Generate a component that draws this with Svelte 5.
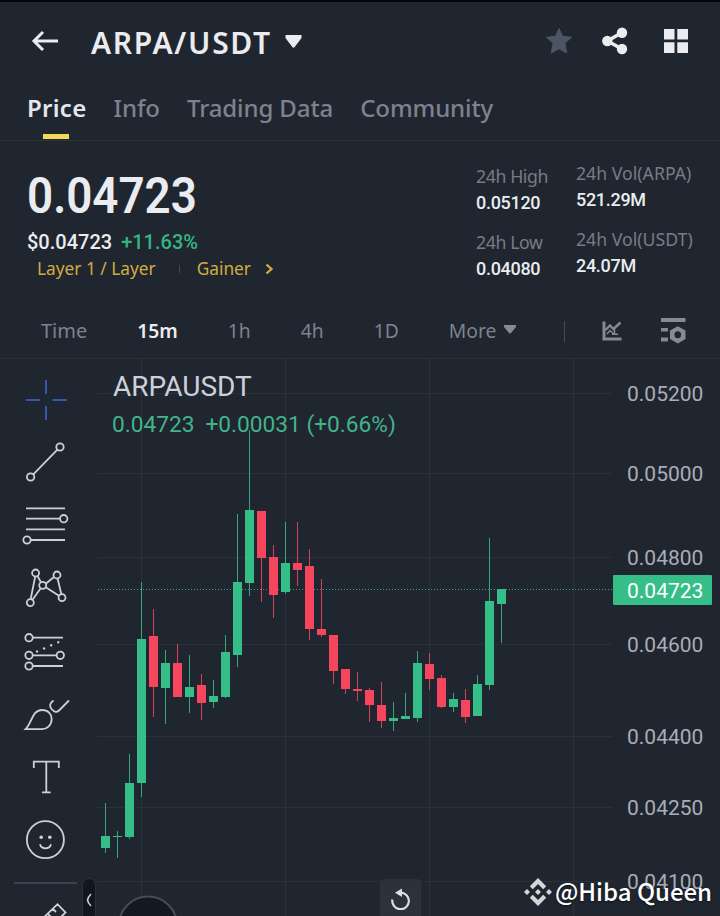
<script lang="ts">
  type Candle = [high: number, top: number, bottom: number, low: number, up: boolean];

  const tabs = ["Price", "Info", "Trading Data", "Community"];
  const intervals = ["Time", "15m", "1h", "4h", "1D"];

  let tab = $state("Price");
  let interval = $state("15m");

  // Vertical positions in chart units, one entry per 15 minutes
  const candles: Candle[] = [
    [803, 836, 848, 853, true],
    [831, 836, 837, 858, true],
    [754, 783, 837, 839, true],
    [582, 639, 783, 797, true],
    [609, 636, 687, 717, false],
    [650, 663, 688, 724, true],
    [644, 663, 697, 697, false],
    [655, 687, 697, 713, true],
    [674, 685, 703, 720, false],
    [680, 696, 702, 708, true],
    [635, 652, 697, 698, true],
    [514, 582, 655, 667, true],
    [430, 510, 583, 596, true],
    [511, 511, 558, 602, false],
    [545, 557, 595, 618, false],
    [522, 563, 592, 594, true],
    [522, 563, 570, 586, false],
    [549, 566, 629, 640, false],
    [579, 629, 635, 637, false],
    [635, 635, 671, 684, false],
    [669, 669, 689, 694, false],
    [672, 689, 691, 701, false],
    [688, 690, 705, 722, false],
    [682, 705, 721, 728, false],
    [702, 718, 721, 731, true],
    [693, 716, 719, 719, true],
    [651, 663, 718, 722, true],
    [653, 664, 679, 690, false],
    [675, 678, 707, 708, false],
    [693, 699, 707, 712, true],
    [689, 700, 717, 723, false],
    [675, 684, 716, 716, true],
    [538, 601, 685, 690, true],
    [589, 589, 604, 643, true],
  ];

  const priceLines = [
    { y: 393, label: "0.05200" },
    { y: 473, label: "0.05000" },
    { y: 557, label: "0.04800" },
    { y: 644, label: "0.04600" },
    { y: 736, label: "0.04400" },
    { y: 807, label: "0.04250" },
    { y: 881, label: "0.04100" },
  ];
  const timeLines = [141, 285, 429, 573];
</script>

<div class="screen">
  <header>
    <svg class="back" width="28" height="24" viewBox="0 0 28 24">
      <path d="M27 12H3M12 3L3 12L12 21" fill="none" stroke="#eaecef" stroke-width="3" />
    </svg>
    <h1>ARPA/USDT</h1>
    <svg class="title-caret" width="17" height="13" viewBox="0 0 17 13">
      <path d="M0.5 0H16.5V3L9.5 12.3Q8.5 13 7.5 12.3L0.5 3Z" fill="#eaecef" />
    </svg>
    <div class="actions">
      <svg width="28" height="28" viewBox="0 0 28 28">
        <path
          d="M14 1.5L17.6 9.3L26.5 10.3L19.9 16.2L21.8 26L14 21.8L6.2 26L8.1 16.2L1.5 10.3L10.4 9.3Z"
          fill="#4b5563"
          stroke="#4b5563"
          stroke-linejoin="round"
        />
      </svg>
      <svg width="28" height="28" viewBox="0 0 28 28">
        <path d="M21 5.5L6.5 14L21 22" fill="none" stroke="#eaecef" stroke-width="3.6" />
        <circle cx="21" cy="5.7" r="5.2" fill="#eaecef" />
        <circle cx="6.3" cy="14" r="5.2" fill="#eaecef" />
        <circle cx="21" cy="22" r="5.2" fill="#eaecef" />
      </svg>
      <svg width="24" height="24" viewBox="0 0 24 24">
        <path d="M0 0H10.5V10.5H0ZM13.3 0H24V10.5H13.3ZM0 13.3H10.5V24H0ZM13.3 13.3H24V24H13.3Z" fill="#eaecef" />
      </svg>
    </div>
  </header>

  <nav class="tabs">
    {#each tabs as name}
      <button class="tab" class:active={tab === name} onclick={() => (tab = name)}>{name}</button>
    {/each}
  </nav>

  <section class="summary">
    <div class="last">
      <div class="price">0.04723</div>
      <div class="change"><span>$0.04723</span><span class="up">+11.63%</span></div>
      <div class="tags">
        <span class="layer">Layer 1 / Layer</span>
        <i></i>
        <span class="gainer">Gainer</span>
        <svg width="9" height="12" viewBox="0 0 9 12">
          <path d="M1.5 1.5L6.5 6L1.5 10.5" fill="none" stroke="#d3ab3f" stroke-width="2.3" />
        </svg>
      </div>
    </div>
    <dl class="range">
      <dt>24h High</dt>
      <dd>0.05120</dd>
      <dt>24h Low</dt>
      <dd>0.04080</dd>
    </dl>
    <dl class="volume">
      <dt>24h Vol(ARPA)</dt>
      <dd>521.29M</dd>
      <dt>24h Vol(USDT)</dt>
      <dd>24.07M</dd>
    </dl>
  </section>

  <div class="intervals">
    {#each intervals as name}
      <button class="interval" class:active={interval === name} onclick={() => (interval = name)}>{name}</button>
    {/each}
    <button class="interval more">
      More
      <svg width="12" height="9" viewBox="0 0 12 9">
        <path d="M0 0H12V2L6.8 8.2Q6 9 5.2 8.2L0 2Z" fill="#858a95" />
      </svg>
    </button>
    <span class="divider"></span>
    <svg class="indicator" width="20" height="20" viewBox="0 0 20 20">
      <path d="M2 0.5V18H19.5" fill="none" stroke="#858a95" stroke-width="3" />
      <path d="M3.5 9L8 4.5L11.5 8L18.5 1.5" fill="none" stroke="#858a95" stroke-width="2.4" />
      <path d="M5 13L8 9.5L12 13M10 13.2H16M12.5 8.5V13" fill="none" stroke="#858a95" stroke-width="1.5" />
    </svg>
    <svg class="settings" width="25" height="27" viewBox="0 0 25 27">
      <path d="M0 1H24.5V5H0ZM0 11H7V14.5H0ZM0 20.5H7V24.5H0Z" fill="#858a95" />
      <path
        d="M16.8 9.3L24.5 13.4V22L16.8 26.5L9 22V13.4ZM16.8 14.3A3.3 3.5 0 1 0 16.8 21.3A3.3 3.5 0 1 0 16.8 14.3Z"
        fill="#858a95"
        fill-rule="evenodd"
      />
    </svg>
  </div>

  <main>
    <aside>
      <svg class="tool cross" viewBox="0 0 48 48">
        <path d="M24 4V18M24 30V44M4 24H18M30.5 24H45" />
      </svg>
      <svg class="tool" viewBox="0 0 48 48">
        <path d="M11.3 35.4L35.4 10.7" />
        <circle cx="38" cy="8" r="3.7" />
        <circle cx="8.6" cy="38" r="3.7" />
      </svg>
      <svg class="tool" viewBox="0 0 48 48">
        <path d="M4 6.3H43M4 16.7H38M4 27.3H43M9 38H43" />
        <circle cx="41.7" cy="16.7" r="3.7" />
        <circle cx="5" cy="38" r="3.7" />
      </svg>
      <svg class="tool" viewBox="0 0 48 48">
        <path d="M13.2 11.5L8.7 34M15.5 11L18.8 17M18.7 23.3L10.5 34.8M24 18.5L32 12M35.6 13.5L39.3 29M23.7 22.3L37 30.7" />
        <circle cx="13.6" cy="8" r="3.5" />
        <circle cx="20.7" cy="20.3" r="3.5" />
        <circle cx="35" cy="10" r="3.5" />
        <circle cx="8.3" cy="37.7" r="3.5" />
        <circle cx="40" cy="32.6" r="3.5" />
      </svg>
      <svg class="tool" viewBox="0 0 48 48">
        <path d="M11 9.7H41M11 27.3H34.5M11 38H41" />
        <path class="dots" d="M15 23.5L38 13.5" />
        <circle cx="7" cy="9.7" r="3.7" />
        <circle cx="7" cy="27.3" r="3.7" />
        <circle cx="38.3" cy="27.3" r="3.7" />
        <circle cx="7" cy="38" r="3.7" />
      </svg>
      <svg class="tool" viewBox="0 0 48 48">
        <path d="M3.5 38.2C10 32 10 19 20 19C26 19 29.7 23 29.7 28C29.7 34 25 38.2 20 38.2Z" />
        <path d="M31.5 9.5C28 12 27 15 29.5 18C32.5 21.5 35 21.5 37 19.5L47 9.5" />
      </svg>
      <svg class="tool" viewBox="0 0 48 48">
        <path d="M11.8 14V7.7H36.8V14M24.3 7.7V38.3M20 38.3H28.7" />
      </svg>
      <svg class="tool" viewBox="0 0 48 48">
        <circle cx="23.4" cy="22.7" r="18.5" />
        <path d="M18 27.3Q19 31.3 23.4 31.3Q28 31.3 29 27.3" />
        <circle class="eye" cx="19.2" cy="20.3" r="1.8" />
        <circle class="eye" cx="27.8" cy="20.3" r="1.8" />
      </svg>
      <hr />
      <svg class="tool ruler" viewBox="0 0 48 48">
        <path d="M14 24L35.5 3.2L43.5 11.5L22 32ZM31 8L34 11M26 13L29 16M21 18L24 21" />
      </svg>
      <button class="collapse" aria-label="Collapse tools">
        <svg width="6" height="14" viewBox="0 0 6 14">
          <path d="M5 1Q2 4 1.5 7Q2 10 5 13" fill="none" stroke="#c9ccd6" stroke-width="1.6" />
        </svg>
      </button>
    </aside>

    <div class="chart">
      <svg width="622" height="557" viewBox="98 359 622 557">
        {#each timeLines as x}
          <rect class="grid" {x} y="359" width="1" height="557" />
        {/each}
        {#each priceLines as line}
          <rect class="grid" x="98" y={line.y} width="514" height="1" />
          <text class="axis" x="627" y={line.y + 8}>{line.label}</text>
        {/each}
        <path class="last-line" d="M98 589.5H613" />
        {#each candles as [high, top, bottom, low, up], i}
          <g class:bull={up} class:bear={!up}>
            <rect class="wick" x={105 + i * 12} y={high} width="1" height={low - high} />
            <rect x={101 + i * 12} y={top} width="9" height={bottom - top} />
          </g>
        {/each}
        <rect class="last-tag" x="613" y="575" width="99" height="30" rx="1" />
        <text class="axis last-text" x="627" y="598">0.04723</text>
        <circle cx="148" cy="925.5" r="29" fill="#131821" stroke="#484c57" stroke-width="2" />
      </svg>

      <div class="legend">
        <div class="symbol">ARPAUSDT</div>
        <div class="quote"><span>0.04723</span><span>+0.00031 (+0.66%)</span></div>
      </div>

      <button class="reset" aria-label="Reset chart">
        <svg width="20" height="22" viewBox="0 0 20 22">
          <path d="M1.4 11.5A8.3 8.3 0 1 0 9.5 4.6" fill="none" stroke="#dcdee4" stroke-width="2.2" />
          <path d="M11 0.5V9L4 4.7Z" fill="#dcdee4" />
        </svg>
      </button>
    </div>
  </main>

  <div class="watermark">
    <svg width="28" height="28" viewBox="0 0 28 28">
      <path
        d="M14 0L22.2 8.2L19.2 11.2L14 6L8.8 11.2L5.8 8.2ZM3 11L6 14L3 17L0 14ZM14 11L17 14L14 17L11 14ZM25 11L28 14L25 17L22 14ZM5.8 19.8L8.8 16.8L14 22L19.2 16.8L22.2 19.8L14 28Z"
        fill="#d5d6d8"
      />
    </svg>
    <span>@Hiba Queen</span>
  </div>
</div>

<style>
  :global(body) {
    background: #1f2630;
  }

  .screen {
    position: relative;
    box-sizing: border-box;
    width: 720px;
    height: 916px;
    overflow: hidden;
    border-top: 2px solid #050607;
    background: #1f2630;
    color: #eaecef;
    font-family: "Noto Sans", sans-serif;
  }

  button {
    background: none;
    border: none;
    padding: 0;
    color: inherit;
    font: inherit;
    cursor: pointer;
  }

  svg {
    display: block;
    flex: none;
  }

  header {
    display: flex;
    align-items: center;
    height: 78px;
    padding: 0 32px 0 31px;
  }

  h1 {
    margin: 4px 0 0 32px;
    width: 180px;
    font-size: 30px;
    font-weight: 600;
    line-height: 40px;
    letter-spacing: 1.7px;
    white-space: nowrap;
  }

  .title-caret {
    margin-left: 14px;
  }

  .actions {
    display: flex;
    align-items: center;
    gap: 28px;
    margin-left: auto;
  }

  .actions svg:last-child {
    margin-left: 7px;
  }

  .tabs {
    display: flex;
    gap: 27px;
    height: 60px;
    padding-left: 27px;
    border-bottom: 1px solid #2b323c;
  }

  .tab {
    position: relative;
    height: 54px;
    color: #7d828e;
    font-size: 24px;
    font-weight: 500;
    letter-spacing: -0.1px;
    white-space: nowrap;
  }

  .tab.active {
    color: #e4e6ee;
    font-weight: 600;
    letter-spacing: 0.3px;
  }

  .tab.active::after {
    content: "";
    position: absolute;
    left: 50%;
    bottom: -5px;
    width: 26px;
    height: 5px;
    margin-left: -14px;
    background: #f3d75a;
  }

  .summary {
    display: flex;
    height: 163px;
  }

  .last {
    width: 449px;
    padding: 28px 0 0 27px;
  }

  .price {
    font-family: Roboto, sans-serif;
    font-size: 50px;
    font-weight: 600;
    line-height: 54px;
    transform: scaleX(0.915);
    transform-origin: left;
  }

  .change {
    display: flex;
    gap: 9px;
    margin-top: 7px;
    font-family: Roboto, sans-serif;
    font-size: 20px;
    font-weight: 500;
    line-height: 24px;
  }

  .up {
    color: #35b580;
  }

  .tags {
    display: flex;
    align-items: center;
    height: 28px;
    margin: 1px 0 0 10px;
    color: #d3ab3f;
    font-size: 17.3px;
    line-height: 28px;
    white-space: nowrap;
  }

  .tags i {
    width: 1px;
    height: 8px;
    margin: 0 17px 0 23px;
    background: #404751;
  }

  .tags svg {
    margin-left: 14px;
  }

  dl {
    width: 100px;
    margin: 0;
    padding-top: 22px;
    white-space: nowrap;
  }

  .volume {
    padding-top: 19px;
  }

  dt {
    height: 26px;
    color: #777c87;
    font-size: 17.7px;
    line-height: 26px;
  }

  .range dt {
    letter-spacing: -0.4px;
  }

  dd {
    height: 27px;
    margin: 0 0 13px;
    font-family: Roboto, sans-serif;
    font-size: 18px;
    font-weight: 500;
    line-height: 27px;
    letter-spacing: -0.3px;
  }

  .intervals {
    display: flex;
    align-items: center;
    height: 54px;
    padding-left: 41px;
    border-bottom: 1px solid #29303a;
  }

  .interval {
    margin-right: 50px;
    color: #7d828e;
    font-size: 19.3px;
    line-height: 28px;
    white-space: nowrap;
  }

  .interval:first-child {
    font-size: 20px;
  }

  .interval.active {
    color: #eaecef;
    font-weight: 600;
  }

  .more {
    display: flex;
    align-items: center;
    gap: 8px;
    margin-right: 48px;
  }

  .more svg {
    margin-top: -3px;
  }

  .divider {
    width: 1px;
    height: 21px;
    background: #454c57;
  }

  .indicator {
    margin-left: 37px;
  }

  .settings {
    margin: -2px 0 0 39px;
  }

  main {
    display: flex;
    height: 557px;
  }

  aside {
    position: relative;
    display: flex;
    flex-direction: column;
    gap: 15px;
    width: 76px;
    padding: 17px 0 0 22px;
  }

  .tool {
    width: 48px;
    height: 48px;
    fill: none;
    stroke: #cdd0da;
    stroke-width: 1.8;
  }

  .cross {
    stroke: #3557ae;
    stroke-width: 2;
  }

  .dots {
    stroke-width: 2.4;
    stroke-dasharray: 0.1 7.6;
    stroke-linecap: round;
  }

  .eye {
    fill: #cdd0da;
    stroke: none;
  }

  hr {
    flex: none;
    width: 63px;
    height: 2px;
    margin: 2px 0 0 -8px;
    border: none;
    background: #3b414d;
  }

  .ruler {
    margin-top: 2px;
  }

  .collapse {
    position: absolute;
    left: 82px;
    top: 519px;
    display: flex;
    justify-content: center;
    width: 14px;
    height: 50px;
    padding-top: 14px;
    border: 1px solid #2b313c;
    border-radius: 7px 7px 0 0;
    background: #12161f;
  }

  .chart {
    position: relative;
    width: 622px;
  }

  .grid {
    fill: #29313a;
  }

  .axis {
    fill: #a9adb8;
    font-family: Roboto, sans-serif;
    font-size: 21px;
  }

  .last-line {
    fill: none;
    stroke: #4c9c82;
    stroke-width: 1;
    stroke-dasharray: 1 2;
  }

  .last-tag {
    fill: #35be88;
  }

  .last-text {
    fill: #fff;
  }

  .bull {
    fill: #35be88;
  }

  .bear {
    fill: #f6465d;
  }

  .wick {
    opacity: 0.85;
  }

  .legend {
    position: absolute;
    left: 15px;
    top: 11px;
    font-family: Roboto, sans-serif;
    white-space: nowrap;
  }

  .symbol {
    color: #cdd0da;
    font-size: 28px;
    line-height: 34px;
  }

  .quote {
    display: flex;
    gap: 11px;
    margin: 7px 0 0 -1px;
    color: #43b38a;
    font-size: 22.7px;
    line-height: 28px;
  }

  .reset {
    position: absolute;
    left: 282px;
    top: 520px;
    display: flex;
    justify-content: center;
    width: 41px;
    height: 42px;
    padding-top: 9px;
    border-radius: 4px;
    background: #2c313c;
  }

  .watermark {
    position: absolute;
    left: 524px;
    top: 872px;
    display: flex;
    align-items: center;
    gap: 3px;
    height: 36px;
    color: #fff;
    font-family: "Noto Sans CJK SC", sans-serif;
    font-size: 24px;
    font-weight: 500;
    white-space: nowrap;
    text-shadow: 0 1px 2px rgba(0, 0, 0, 0.5);
  }

  .watermark span {
    margin-top: -4px;
  }
</style>
